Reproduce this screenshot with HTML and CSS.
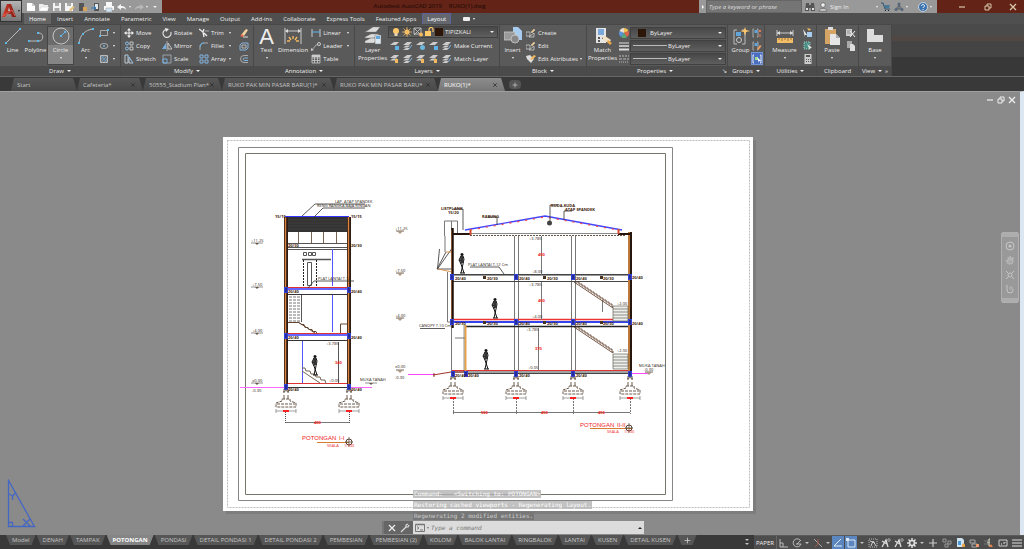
FILE: index.html
```html
<!DOCTYPE html>
<html lang="en">
<head>
<meta charset="utf-8">
<title>Autodesk AutoCAD 2019 RUKO(1).dwg</title>
<link rel="stylesheet" href="styles.css">
</head>
<body>
<svg class="defs" aria-hidden="true">
<defs>
<linearGradient id="red-a" x1="0" y1="0" x2="1" y2="0"><stop offset="0" stop-color="#d8402c"/><stop offset="1" stop-color="#7c1712"/></linearGradient>
<symbol id="new" viewBox="0 0 10 10"><path d="M1 1h5l3 3v5H1z" fill="#fff"/><path d="M6 1v3h3" fill="#ccc"/></symbol>
<symbol id="open" viewBox="0 0 10 10"><path d="M0 2h4l1 1h4v6H0z" fill="#eee"/><path d="M2 5h8L8 9H0z" fill="#fff" stroke="#bbb" stroke-width=".4"/></symbol>
<symbol id="save" viewBox="0 0 10 10"><path d="M1 1h8v8H1z" fill="#f4f4f4"/><path d="M3 1h4v3H3zM2.500 6h5v3h-5z" fill="#aaa"/></symbol>
<symbol id="saveas" viewBox="0 0 10 10"><path d="M0 1h8v8H0z" fill="#f4f4f4"/><path d="M2 1h4v3H2z" fill="#aaa"/><path d="M4 8l4-4 1.500 1.500-4 4z" fill="#e8c078"/></symbol>
<symbol id="webopen" viewBox="0 0 10 10"><path d="M1 1h5v8H1z" fill="#555"/><path d="M5 5h4v4H5z" fill="#d9a45a"/></symbol>
<symbol id="websave" viewBox="0 0 10 10"><path d="M3 1h5v8H3z" fill="#555"/><path d="M4 2h3v5H4z" fill="#dfe8ee"/><path d="M0 6h5M3 4l2 2-2 2" stroke="#357cc0" fill="none"/></symbol>
<symbol id="print" viewBox="0 0 10 10"><path d="M2 0h6v4H2zM0 4h10v4H0z" fill="#f8f8f8"/><path d="M2 6h6v4H2z" fill="#cfe0ee" stroke="#888" stroke-width=".4"/></symbol>
<symbol id="undo" viewBox="0 0 10 10"><path d="M0 5l4-3v2c3 0 5 1 5 4-1-2-3-2-5-2v2z" fill="#f4f4f4"/></symbol>
<symbol id="redo" viewBox="0 0 10 10"><path d="M10 5L6 2v2C3 4 1 5 1 8c1-2 3-2 5-2v2z" fill="#b8b8b8"/></symbol>
<symbol id="line" viewBox="0 0 18 18"><path d="M2 16L16 2" stroke="#bbb"/><path d="M1 15h2v2H1zM15 1h2v2h-2z" fill="#62b5e8"/></symbol>
<symbol id="pline" viewBox="0 0 18 18"><path d="M2 14h10c5 0 5-8 0-8" stroke="#bbb" fill="none"/><path d="M1 13h2v2H1zM10 13h2v2h-2zM10 5h2v2h-2z" fill="#62b5e8"/></symbol>
<symbol id="circle" viewBox="0 0 18 18"><circle cx="9" cy="9" r="8" fill="none" stroke="#c4c4c4"/><path d="M9 9l4-4" stroke="#62b5e8"/><path d="M8 8h2v2H8zM12 4h2v2h-2z" fill="#62b5e8"/></symbol>
<symbol id="arc" viewBox="0 0 18 18"><path d="M2 16C3 8 8 3 16 2" fill="none" stroke="#bbb"/><path d="M1 15h2v2H1zM5 6h2v2H5zM15 1h2v2h-2z" fill="#62b5e8"/></symbol>
<symbol id="rect" viewBox="0 0 10 10"><path d="M1.500 2.500h7v5h-7z" fill="none" stroke="#aaa"/><path d="M0 7h2v2H0zM8 1h2v2H8z" fill="#62b5e8"/></symbol>
<symbol id="ellipse" viewBox="0 0 10 10"><ellipse cx="5" cy="5" rx="4" ry="2.500" fill="none" stroke="#aaa"/><circle cx="5" cy="5" r="1" fill="#62b5e8"/></symbol>
<symbol id="hatch" viewBox="0 0 10 10"><path d="M1.500 1.500h7v7h-7z" fill="#777" stroke="#bbb"/><path d="M2 8l6-6M2 5l3-3M5 8l3-3M2 2l6 6" stroke="#62a5d8" stroke-width=".7"/></symbol>
<symbol id="move" viewBox="0 0 10 10"><path d="M5 0l2 2.500H3zM5 10l2-2.500H3zM0 5l2.500-2v4zM10 5L7.500 3v4z" fill="#eee"/><path d="M5 1v8M1 5h8" stroke="#eee"/></symbol>
<symbol id="copy" viewBox="0 0 10 10"><circle cx="3" cy="2.500" r="1.500" fill="none" stroke="#8ac0e8"/><circle cx="3" cy="7.500" r="1.500" fill="none" stroke="#8ac0e8"/><path d="M6 1h3v3H6zM6 6h3v3H6z" fill="none" stroke="#ddd" stroke-width=".8"/></symbol>
<symbol id="stretch" viewBox="0 0 10 10"><path d="M1 1h3v8H1zM5 3l4 6H5z" fill="none" stroke="#c8d4de" stroke-width=".9"/><path d="M3 1l6 8" stroke="#62a5d8" stroke-width=".7"/></symbol>
<symbol id="rotate" viewBox="0 0 10 10"><path d="M4 1.500A4 4 0 1 0 8.800 4" fill="none" stroke="#ddd" stroke-width="1.200"/><path d="M3 0l4 1-3 3z" fill="#eee"/></symbol>
<symbol id="mirror" viewBox="0 0 10 10"><path d="M4 2v6H0z" fill="#77afe0"/><path d="M6 2v6h4z" fill="none" stroke="#ddd" stroke-width=".8"/><path d="M5 0v10" stroke="#ddd" stroke-width=".6"/></symbol>
<symbol id="scale" viewBox="0 0 10 10"><path d="M1 1h8v8H1z" fill="none" stroke="#a8b4be" stroke-width=".8"/><path d="M1 5h4v4H1z" fill="none" stroke="#77afe0"/></symbol>
<symbol id="trim" viewBox="0 0 10 10"><path d="M0 1l4 3 1-3M4 4l1 5M5 5l3 3" stroke="#eee" stroke-width="1.300" fill="none"/><path d="M6 3h4" stroke="#aaa"/></symbol>
<symbol id="fillet" viewBox="0 0 10 10"><path d="M1 9V6c0-3 2-4 4-4h4" fill="none" stroke="#aaa"/><path d="M1 6c0-3 2-4 4-4" fill="none" stroke="#62b5e8"/></symbol>
<symbol id="array" viewBox="0 0 10 10"><path d="M1 1h3v3H1zM6 1h3v3H6zM1 6h3v3H1zM6 6h3v3H6z" fill="none" stroke="#84b4e0"/></symbol>
<symbol id="erase" viewBox="0 0 10 10"><path d="M2 7l5-6 2 1-4 6z" fill="#f3d3a2"/><path d="M1 8l2-2 2 2-1 1z" fill="#e46a50"/><path d="M4 9h5" stroke="#ddd"/></symbol>
<symbol id="explode" viewBox="0 0 10 10"><path d="M1 4l2-2h6v5L7 9H1z" fill="none" stroke="#84b4e0"/><path d="M3 4h4v3H3z" fill="none" stroke="#ccc" stroke-width=".8"/></symbol>
<symbol id="offset" viewBox="0 0 10 10"><path d="M9 1.500H5a3.500 3.500 0 0 0 0 7h4" fill="none" stroke="#aaa"/><path d="M9 4H5.500a1.200 1.200 0 0 0 0 2.500H9" fill="none" stroke="#84b4e0"/></symbol>
<symbol id="dim" viewBox="0 0 18 18"><path d="M1 1v16M17 1v16M2 4h14" stroke="#ccc" fill="none"/><path d="M1 4l3-2v4zM17 4l-3-2v4z" fill="#ddd"/><path d="M9 9v3M5 10l2 3M13 10l-2 3M3 14h3M12 14h3" stroke="#f3b95f" stroke-width="1.400"/></symbol>
<symbol id="linear" viewBox="0 0 10 10"><path d="M1 1v8M9 1v8" stroke="#ccc"/><path d="M1 4h8" stroke="#62b5e8"/></symbol>
<symbol id="leader" viewBox="0 0 10 10"><path d="M1 9l4-5h2" fill="none" stroke="#aaa"/><circle cx="8" cy="3" r="1.500" fill="none" stroke="#ccc"/><path d="M0 7l3 2-3 1z" fill="#ccc"/></symbol>
<symbol id="table" viewBox="0 0 10 10"><path d="M1 1h8v8H1zM1 4h8M1 6.500h8M3.500 2v7M6.500 2v7" fill="none" stroke="#ccc" stroke-width=".8"/><path d="M1 1h8v2H1z" fill="#ccc"/></symbol>
<symbol id="layers" viewBox="0 0 18 18"><path d="M1 14l6-3h8l-5 5H1zM1 10l6-3h8l-5 4H1zM3 4l6-4h7l-4 5H1z" fill="#dcdcdc" stroke="#777" stroke-width=".4"/><path d="M11 8h6v9h-6z" fill="#dde8f0" stroke="#777" stroke-width=".5"/><path d="M12 9h4v3h-4z" fill="#62a5d8"/></symbol>
<symbol id="bulb" viewBox="0 0 10 10"><circle cx="5" cy="4" r="3" fill="#ffc868"/><path d="M3.500 6h3v3h-3z" fill="#e8d5b0"/></symbol>
<symbol id="sun" viewBox="0 0 10 10"><circle cx="5" cy="5" r="2.500" fill="#ffc868"/><path d="M5 0v10M0 5h10M1.500 1.500l7 7M8.500 1.500l-7 7" stroke="#f3b95f" stroke-width=".8"/></symbol>
<symbol id="vpf" viewBox="0 0 10 10"><path d="M1 1h7v6H1zM1 1l7 7M8 1L1 8" fill="none" stroke="#bbb"/><circle cx="8" cy="7.500" r="2" fill="#f3b95f"/></symbol>
<symbol id="lock" viewBox="0 0 10 10"><path d="M1 4h6v5H1z" fill="#ffc868"/><path d="M5 4V2.500a1.500 1.500 0 0 1 4 0V5" fill="none" stroke="#ffc868" stroke-width="1.200"/></symbol>
<symbol id="ly-b" viewBox="0 0 10 10"><path d="M0 4l4-3h5L6 4z" fill="#ccc"/><path d="M5 5h4v4H5z" fill="#5db2e6"/></symbol>
<symbol id="ly-c" viewBox="0 0 10 10"><path d="M0 4l4-3h5L6 4z" fill="#ccc"/><circle cx="6.500" cy="6.500" r="2.500" fill="#6bb7dc"/></symbol>
<symbol id="ly-s" viewBox="0 0 10 10"><path d="M0 4l4-3h5L6 4zM0 6.500l3-2h4l-2 2zM0 9l3-2h4L5 9z" fill="#ccc"/><path d="M6 8l3-4" stroke="#84b4e0"/></symbol>
<symbol id="ly-o" viewBox="0 0 10 10"><path d="M0 4l4-3h5L6 4zM0 6.500l3-2h4l-2 2z" fill="#ccc"/><path d="M5 5h3v4H5z" fill="#f3b95f"/></symbol>
<symbol id="insert" viewBox="0 0 18 18"><path d="M9 0h5l4 4v9H9z" fill="#a8ccf0"/><path d="M0 5h11v8H0z" fill="#9a9a9a" stroke="#ccc" stroke-width=".8"/><circle cx="11" cy="12" r="4" fill="#888" stroke="#ccc" stroke-width=".8"/></symbol>
<symbol id="create" viewBox="0 0 10 10"><path d="M0 4h4v4H0zM3 9h5V5z" fill="none" stroke="#ccc" stroke-width=".8"/><path d="M5 4l3-3 1 1-3 3z" fill="#ffc868" stroke="#ccc" stroke-width=".5"/></symbol>
<symbol id="attr" viewBox="0 0 10 10"><path d="M0 2l4-1 4 4-3 4-4-4z" fill="#ddd"/><path d="M4 5l4-4 2 1-4 4z" fill="#f3b95f"/></symbol>
<symbol id="match" viewBox="0 0 18 18"><path d="M2 1h10v15H2z" fill="#e4e4e4"/><path d="M4 2h6v6H4z" fill="#79a9da"/><path d="M4 10h2v2H4zM8 10h2v2H8zM4 13h2v2H4z" fill="#555"/><path d="M8 10l3-1 6 4-2 3-5-2z" fill="#f0e2c4"/><path d="M14 13l4 3-2 2-3-3z" fill="#e8a54a"/></symbol>
<symbol id="wheel" viewBox="0 0 10 10"><path d="M5 5V0a5 5 0 0 1 4.500 3z" fill="#f0c050"/><path d="M5 5l4.500-2A5 5 0 0 1 8 9z" fill="#dd6548"/><path d="M5 5l3 4a5 5 0 0 1-6 0z" fill="#5aa878"/><path d="M5 5L2 9a5 5 0 0 1-1.500-6z" fill="#5794da"/><path d="M5 5L.5 3A5 5 0 0 1 5 0z" fill="#e9dcd0"/></symbol>
<symbol id="lw" viewBox="0 0 10 10"><path d="M0 2h10" stroke="#ddd"/><path d="M0 5h10" stroke="#ddd" stroke-width="1.500"/><path d="M0 8.500h10" stroke="#ddd" stroke-width="2"/></symbol>
<symbol id="lt" viewBox="0 0 10 10"><path d="M0 2h10" stroke="#bbb" stroke-dasharray="2 1"/><path d="M0 5h10" stroke="#bbb" stroke-dasharray="3 1"/><path d="M0 8h10" stroke="#bbb" stroke-dasharray="1 1"/></symbol>
<symbol id="group" viewBox="0 0 18 18"><path d="M5 3H2v14h3M10 3h3v14h-3" fill="none" stroke="#bbb"/><circle cx="7" cy="13" r="2.500" fill="none" stroke="#ccc"/><path d="M4 5h5v4H4z" fill="#62a5d8"/><path d="M13 0l1 3 4 1-4 1-1 4-1-4-4-1 4-1z" fill="#ffc868"/></symbol>
<symbol id="gsm" viewBox="0 0 10 10"><path d="M2 1H1v8h1M5 1h1v8H5" fill="none" stroke="#aaa"/><path d="M2.500 2h3v3h-3z" fill="#62a5d8"/><path d="M7 2l2 2M9 2L7 4M8 6v3" stroke="#e47850"/></symbol>
<symbol id="gedit" viewBox="0 0 10 10"><path d="M2 1H1v8h1M5 1h1v8H5" fill="none" stroke="#aaa"/><path d="M2.500 2h3v3h-3z" fill="#62a5d8"/><path d="M5 8l3-4 1.500 1-3 4z" fill="#f0a060"/></symbol>
<symbol id="gsel" viewBox="0 0 10 10"><path d="M2 1H1v8h1M8 1h1v8H8" fill="none" stroke="#eee"/><path d="M3 3h3v3H3z" fill="#9ed88d"/><path d="M5 3l4 4H7v2z" fill="#fff"/></symbol>
<symbol id="measure" viewBox="0 0 18 18"><path d="M1 3v6M17 3v6M1 6h16" stroke="#ccc"/><path d="M1 6l3-2v4zM17 6l-3-2v4z" fill="#ddd"/><path d="M1 11h16v5H1z" fill="#f3bd68"/><path d="M3 11v2M6 11v3M9 11v2M12 11v3M15 11v2" stroke="#7a5b2a" stroke-width=".7"/></symbol>
<symbol id="qsel" viewBox="0 0 10 10"><path d="M0 1l4 6H2v2z" fill="#eee"/><path d="M4 4h5v5H4z" fill="#a8ccf0"/><path d="M4 0l2 3 2-2z" fill="#f3b95f"/></symbol>
<symbol id="sela" viewBox="0 0 10 10"><path d="M1 1h6v7H1z" fill="#4c8e86" stroke="#a0d0c0" stroke-dasharray="1 1"/><path d="M4 3l5 4H7v2z" fill="#eee"/></symbol>
<symbol id="calc" viewBox="0 0 10 10"><path d="M1.500 0h7v10h-7z" fill="#ccc"/><path d="M3 1h4v2H3zM3 5h1v1H3zM5 5h1v1H5zM7 5h1v1H7zM3 7h1v1H3zM5 7h1v1H5zM7 7h1v1H7z" fill="#555"/></symbol>
<symbol id="paste" viewBox="0 0 18 18"><path d="M2 2h11v15H2z" fill="#d6a565"/><path d="M5 0h5v3H5z" fill="#ddd"/><path d="M7 7h6l4 4v7H7z" fill="#e6e6e6"/><path d="M13 7v4h4" fill="#aaa"/></symbol>
<symbol id="cut" viewBox="0 0 10 10"><path d="M0 1h6v7H0z" fill="#ccc"/><path d="M1 3h4M1 5h4" stroke="#777" stroke-width=".7"/><path d="M4 3l5 6M9 3L4 9" stroke="#eee"/></symbol>
<symbol id="copyc" viewBox="0 0 10 10"><path d="M1 0h5v7H1z" fill="#aaa"/><path d="M4 3h3l2 2v5H4z" fill="#ddd"/></symbol>
<symbol id="base" viewBox="0 0 18 18"><path d="M1 2h7v6h9v7H1z" fill="#dcdcdc"/></symbol>
<symbol id="binoc" viewBox="0 0 10 10"><path d="M1 1h3v2h2V1h3l1 8H6V6H4v3H0z" fill="#555"/><path d="M1 6h2v2H1zM7 6h2v2H7z" fill="#ddd"/></symbol>
<symbol id="user" viewBox="0 0 10 10"><circle cx="5" cy="3" r="2.300" fill="#eee" stroke="#555" stroke-width=".7"/><path d="M1 9c0-3 8-3 8 0z" fill="#eee" stroke="#555" stroke-width=".7"/></symbol>
<symbol id="cart" viewBox="0 0 10 10"><path d="M0 1h2l2 6h5" fill="none" stroke="#2e5270"/><path d="M3 3h6L8 6H4z" fill="#4c7898"/><path d="M4 8h1v1H4zM7 8h1v1H7z" fill="#222"/></symbol>
<symbol id="share" viewBox="0 0 10 10"><path d="M5 3L2 7h6zM5 3v4" fill="none" stroke="#44525e" stroke-width=".8"/><circle cx="5" cy="2" r="1.500" fill="#55677a"/><circle cx="2" cy="7.500" r="1.500" fill="#55677a"/><circle cx="8" cy="7.500" r="1.500" fill="#55677a"/></symbol>
<symbol id="help" viewBox="0 0 10 10"><circle cx="5" cy="5" r="4.500" fill="#3d73b0" stroke="#eee" stroke-width=".7"/><path d="M3.500 4c0-2 3-2 3 0 0 1-1.500 1-1.500 2M5 7v1" fill="none" stroke="#fff"/></symbol>
<symbol id="min" viewBox="0 0 10 10"><path d="M2 5h6" stroke="currentColor" stroke-width="1.200"/></symbol>
<symbol id="restore" viewBox="0 0 10 10"><path d="M2 4h4v4H2zM4 4V2h4v4H6" fill="none" stroke="currentColor"/></symbol>
<symbol id="x" viewBox="0 0 10 10"><path d="M2 2l6 6M8 2L2 8" stroke="currentColor" stroke-width="1.300"/></symbol>
<symbol id="ortho" viewBox="0 0 10 10"><path d="M1 1v8h8M1 5h3v4" fill="none" stroke="#bbb"/></symbol>
<symbol id="polar" viewBox="0 0 10 10"><path d="M8 2A4 4 0 1 0 9 6H4M5 6l4-4" fill="none" stroke="#bbb"/></symbol>
<symbol id="iso" viewBox="0 0 10 10"><path d="M1 1l8 8" stroke="#aaa"/><path d="M5 1v5L2 9" stroke="#a85a48" fill="none"/></symbol>
<symbol id="otrack" viewBox="0 0 10 10"><path d="M1 8h8M1 8l7-7" stroke="#e4eef8"/></symbol>
<symbol id="osnap" viewBox="0 0 10 10"><path d="M2 2h7v7H2z" fill="none" stroke="#dce8f4"/><path d="M0 0h3v3H0z" fill="#dce8f4"/></symbol>
<symbol id="annv" viewBox="0 0 10 10"><path d="M1 1h8v8H1z" fill="none" stroke="#bbb" stroke-dasharray="1 1"/><path d="M3 8l2-5 3 5M2 3l5 2" stroke="#ccc" fill="none"/></symbol>
<symbol id="anns" viewBox="0 0 10 10"><path d="M1 9l4-7 2 7M1 3l5 3" stroke="#ddd" stroke-width="1.300" fill="none"/><circle cx="8" cy="2" r="1.300" fill="none" stroke="#ccc" stroke-width=".7"/></symbol>
<symbol id="gear" viewBox="0 0 10 10"><path d="M5 0v10M0 5h10M1.500 1.500l7 7M8.500 1.500l-7 7" stroke="#ddd" stroke-width="1.500"/><circle cx="5" cy="5" r="2.500" fill="#555" stroke="#ddd" stroke-width="1.700"/></symbol>
<symbol id="plus" viewBox="0 0 10 10"><path d="M5 1v8M1 5h8" stroke="#ccc" stroke-width="1.200"/></symbol>
<symbol id="shapes" viewBox="0 0 10 10"><path d="M1 1h3v3H1zM6 3h3v3H6zM3 6h3v3H3z" fill="none" stroke="#999"/></symbol>
<symbol id="page" viewBox="0 0 10 10"><path d="M1 0h5l2 2v7H1z" fill="#cfe2f0"/><path d="M2 3h3v4H2z" fill="#4c9ad8"/><path d="M6 9V7a1.500 1.500 0 0 1 3 0v2z" fill="#e8a54a"/></symbol>
<symbol id="lockui" viewBox="0 0 10 10"><path d="M1 2h5v3H1zM3 6h5v3H3z" fill="none" stroke="#aaa"/><path d="M7 9V6h3v3z" fill="#e89a6a"/></symbol>
<symbol id="iso2" viewBox="0 0 10 10"><path d="M7 0v9a5 5 0 0 1 0-9" fill="#bba"/><path d="M1 3h6M1 6h6" stroke="#777"/><path d="M6 9l2-3 2 3z" fill="#e8824a"/></symbol>
<symbol id="full" viewBox="0 0 10 10"><path d="M1 2h8v6H1z" fill="none" stroke="#ccc"/><path d="M5 5h2V4M4 6H3" stroke="#ddd"/></symbol>
<symbol id="menu" viewBox="0 0 10 10"><path d="M0 2h10M0 5h10M0 8h10" stroke="#ddd" stroke-width="1.200"/></symbol>
<symbol id="wrench" viewBox="0 0 10 10"><path d="M1 9l5-5M6 4l0-2 2-1M6 4h2l1-2" stroke="#ddd" stroke-width="1.200" fill="none"/></symbol>
<symbol id="prompt" viewBox="0 0 10 10"><path d="M.5 1.500h9v7h-9z" fill="#ddd" stroke="#777"/><path d="M.5 1.500h9" stroke="#777" stroke-width="1.500"/><path d="M2 3.500l2 1.500-2 1.500M5 7h3" fill="none" stroke="#666" stroke-width=".8"/></symbol>
</defs>
</svg>

<header class="top">
  <button class="app-menu" aria-label="Application menu"><svg viewBox="0 0 16 16"><path d="M1 14L6 1h4l5 13h-4l-1-3H6l-2 3z" fill="url(#red-a)"/><path d="M7 8l1-4 1 4z" fill="#c9c9c9"/><path d="M2 13l9-6 3 6" fill="none" stroke="#e8806c" stroke-width=".7"/></svg><i class="down"></i></button>
  <div class="top-rows">
    <div class="titlebar">
      <div class="quick">
        <button aria-label="New"><svg><use href="#new"/></svg></button>
        <button aria-label="Open"><svg><use href="#open"/></svg></button>
        <button aria-label="Save"><svg><use href="#save"/></svg></button>
        <button aria-label="Save as"><svg><use href="#saveas"/></svg></button>
        <button aria-label="Open from web"><svg><use href="#webopen"/></svg></button>
        <button aria-label="Save to web"><svg><use href="#websave"/></svg></button>
        <button aria-label="Plot"><svg><use href="#print"/></svg></button>
        <button aria-label="Undo"><svg><use href="#undo"/></svg></button><i class="down"></i>
        <button aria-label="Redo"><svg><use href="#redo"/></svg></button><i class="down"></i>
        <i class="down big"></i>
      </div>
      <h1 class="app-title"><span>Autodesk AutoCAD 2019</span><span>RUKO(1).dwg</span></h1>
      <div class="info">
        <button class="expand" aria-label="Collapse search"><i class="right"></i></button>
        <input class="search" type="text" aria-label="Search" placeholder="Type a keyword or phrase">
        <button aria-label="Find"><svg><use href="#binoc"/></svg></button>
        <button class="sign"><svg><use href="#user"/></svg>Sign In<i class="down"></i></button>
        <button aria-label="App store"><svg><use href="#cart"/></svg></button>
        <button aria-label="Connect"><svg><use href="#share"/></svg><i class="down"></i></button>
        <button class="help" aria-label="Help"><svg><use href="#help"/></svg><i class="down"></i></button>
      </div>
      <div class="window-buttons">
        <button aria-label="Minimize"><svg><use href="#min"/></svg></button>
        <button aria-label="Restore"><svg><use href="#restore"/></svg></button>
        <button aria-label="Close"><svg><use href="#x"/></svg></button>
      </div>
    </div>
    <nav class="ribbon-tabs">
      <button class="current">Home</button><button>Insert</button><button>Annotate</button><button>Parametric</button><button>View</button><button>Manage</button><button>Output</button><button>Add-ins</button><button>Collaborate</button><button>Express Tools</button><button>Featured Apps</button><button class="context">Layout</button>
      <button class="toggle" aria-label="Minimize ribbon"><i class="pill"></i><i class="down"></i></button>
    </nav>
  </div>
</header>

<section class="ribbon">
  <div class="panel draw">
    <div class="tools">
      <button class="large"><svg><use href="#line"/></svg>Line</button>
      <button class="large"><svg><use href="#pline"/></svg>Polyline</button>
      <button class="large hot"><svg><use href="#circle"/></svg>Circle<i class="down"></i></button>
      <button class="large"><svg><use href="#arc"/></svg>Arc<i class="down"></i></button>
      <div class="stack">
        <button aria-label="Rectangle"><svg><use href="#rect"/></svg><i class="down"></i></button>
        <button aria-label="Ellipse"><svg><use href="#ellipse"/></svg><i class="down"></i></button>
        <button aria-label="Hatch"><svg><use href="#hatch"/></svg><i class="down"></i></button>
      </div>
    </div>
    <h2>Draw<i class="down big"></i></h2>
  </div>
  <div class="panel modify">
    <div class="tools grid">
      <button><svg><use href="#move"/></svg>Move</button><button><svg><use href="#rotate"/></svg>Rotate</button><button class="split"><svg><use href="#trim"/></svg>Trim<i class="down"></i></button><button aria-label="Erase"><svg><use href="#erase"/></svg></button>
      <button><svg><use href="#copy"/></svg>Copy</button><button><svg><use href="#mirror"/></svg>Mirror</button><button class="split"><svg><use href="#fillet"/></svg>Fillet<i class="down"></i></button><button aria-label="Explode"><svg><use href="#explode"/></svg></button>
      <button><svg><use href="#stretch"/></svg>Stretch</button><button><svg><use href="#scale"/></svg>Scale</button><button class="split"><svg><use href="#array"/></svg>Array<i class="down"></i></button><button aria-label="Offset"><svg><use href="#offset"/></svg></button>
    </div>
    <h2>Modify<i class="down big"></i></h2>
  </div>
  <div class="panel annotation">
    <div class="tools">
      <button class="large"><span class="letter" aria-hidden="true">A</span>Text<i class="down"></i></button>
      <button class="large"><svg><use href="#dim"/></svg>Dimension</button>
      <div class="stack">
        <button class="split"><svg><use href="#linear"/></svg>Linear<i class="down"></i></button>
        <button class="split"><svg><use href="#leader"/></svg>Leader<i class="down"></i></button>
        <button><svg><use href="#table"/></svg>Table</button>
      </div>
    </div>
    <h2>Annotation<i class="down big"></i></h2>
  </div>
  <div class="panel layer">
    <div class="tools">
      <button class="large"><svg><use href="#layers"/></svg>Layer<br>Properties</button>
      <div class="stack fill">
        <div class="combo"><svg><use href="#bulb"/></svg><svg><use href="#sun"/></svg><svg><use href="#vpf"/></svg><svg><use href="#lock"/></svg><i class="swatch"></i><select aria-label="Layer"><option>TIPIZKALI</option></select><i class="down big"></i></div>
        <div class="icon-row"><button aria-label="Layer off"><svg><use href="#ly-b"/></svg></button><button aria-label="Isolate"><svg><use href="#ly-s"/></svg></button><button aria-label="Freeze"><svg><use href="#ly-c"/></svg></button><button aria-label="Lock layer"><svg><use href="#ly-b"/></svg></button><button><svg><use href="#ly-s"/></svg>Make Current</button></div>
        <div class="icon-row"><button aria-label="Layers on"><svg><use href="#ly-o"/></svg></button><button aria-label="Unisolate"><svg><use href="#ly-s"/></svg></button><button aria-label="Thaw"><svg><use href="#ly-o"/></svg></button><button aria-label="Unlock layer"><svg><use href="#ly-o"/></svg></button><button><svg><use href="#ly-s"/></svg>Match Layer</button></div>
      </div>
    </div>
    <h2>Layers<i class="down big"></i></h2>
  </div>
  <div class="panel block">
    <div class="tools">
      <button class="large"><svg><use href="#insert"/></svg>Insert<i class="down"></i></button>
      <div class="stack fill">
        <button><svg><use href="#create"/></svg>Create</button>
        <button><svg><use href="#create"/></svg>Edit</button>
        <button class="split"><svg><use href="#attr"/></svg>Edit Attributes<i class="down"></i></button>
      </div>
    </div>
    <h2>Block<i class="down big"></i></h2>
  </div>
  <div class="panel props">
    <div class="tools">
      <button class="large"><svg><use href="#match"/></svg>Match<br>Properties</button>
      <div class="stack fill">
        <div class="prop"><svg><use href="#wheel"/></svg><div class="combo"><i class="swatch"></i><select aria-label="Object color"><option>ByLayer</option></select><i class="down big"></i></div></div>
        <div class="prop"><svg><use href="#lw"/></svg><div class="combo"><i class="rule"></i><select aria-label="Lineweight"><option>ByLayer</option></select><i class="down big"></i></div></div>
        <div class="prop"><svg><use href="#lt"/></svg><div class="combo"><i class="rule"></i><select aria-label="Linetype"><option>ByLayer</option></select><i class="down big"></i></div></div>
      </div>
    </div>
    <h2>Properties<i class="down big"></i><span class="launch">↘</span></h2>
  </div>
  <div class="panel groups">
    <div class="tools">
      <button class="large"><svg><use href="#group"/></svg>Group</button>
      <div class="stack">
        <button aria-label="Ungroup"><svg><use href="#gsm"/></svg></button>
        <button aria-label="Group edit"><svg><use href="#gedit"/></svg></button>
        <button class="on" aria-label="Group selection"><svg><use href="#gsel"/></svg></button>
      </div>
    </div>
    <h2>Groups<i class="down big"></i></h2>
  </div>
  <div class="panel utils">
    <div class="tools">
      <button class="large"><svg><use href="#measure"/></svg>Measure<i class="down"></i></button>
      <div class="stack">
        <button aria-label="Quick select"><svg><use href="#qsel"/></svg></button>
        <button aria-label="Select all"><svg><use href="#sela"/></svg></button>
        <button aria-label="Calculator"><svg><use href="#calc"/></svg></button>
      </div>
    </div>
    <h2>Utilities<i class="down big"></i></h2>
  </div>
  <div class="panel clip">
    <div class="tools">
      <button class="large"><svg><use href="#paste"/></svg>Paste<i class="down"></i></button>
      <div class="stack">
        <button aria-label="Cut"><svg><use href="#cut"/></svg></button>
        <button aria-label="Copy clip"><svg><use href="#copyc"/></svg></button>
      </div>
    </div>
    <h2>Clipboard</h2>
  </div>
  <div class="panel view">
    <div class="tools"><button class="large"><svg><use href="#base"/></svg>Base<i class="down"></i></button></div>
    <h2>View<i class="down big"></i><span>»</span></h2>
  </div>
</section>

<nav class="doc-tabs">
  <div class="doc start"><button>Start</button></div>
  <div class="doc cafe"><button>Cafeteria*</button><button class="close" aria-label="Close Cafeteria"><svg><use href="#x"/></svg></button></div>
  <div class="doc stadium"><button>50555_Stadium Plan*</button><button class="close" aria-label="Close Stadium Plan"><svg><use href="#x"/></svg></button></div>
  <div class="doc pasar1"><button>RUKO PAK MIN PASAR BARU(1)*</button><button class="close" aria-label="Close Pasar Baru 1"><svg><use href="#x"/></svg></button></div>
  <div class="doc pasar"><button>RUKO PAK MIN PASAR BARU*</button><button class="close" aria-label="Close Pasar Baru"><svg><use href="#x"/></svg></button></div>
  <div class="doc active"><button>RUKO(1)*</button><button class="close" aria-label="Close RUKO"><svg><use href="#x"/></svg></button></div>
  <button class="add" aria-label="New drawing"><svg><use href="#plus"/></svg></button>
</nav>

<main class="canvas">
  <div class="mdi"><button aria-label="Minimize drawing"><svg><use href="#min"/></svg></button><button aria-label="Restore drawing"><svg><use href="#restore"/></svg></button><button aria-label="Close drawing"><svg><use href="#x"/></svg></button></div>
  <svg class="paper" viewBox="223 137 530 374" role="img" aria-label="Potongan drawing sheet">
    <defs>
      <g id="man"><circle cx="0" cy="1.500" r="1.500" fill="#111"/><path d="M-1 3L-3 7l2 4M1 3l1 3-1 5-2 9M-1 3l0 8 3 9M-3 7l4 1" fill="none" stroke="#111" stroke-width="1"/><path d="M-2 3h3l1 7h-3z" fill="#333"/><path d="M-2 20h5" stroke="#111"/></g>
      <g id="foot" fill="none" stroke="#6b5a4c"><path d="M-2 2v10M2 2v10" stroke-dasharray="4 2"/><path d="M-3 5q3-3 6 0"/><path d="M-4 12h8v2l6 2v4h-20v-4l6-2zM-9 17H9" stroke-dasharray="3 1"/><path d="M-10 24h20M-10 22v4M10 22v4" stroke="#777" stroke-width=".7"/><path d="M-3 24h6" stroke="#f22" stroke-width="2"/></g>
      <g id="beam"><path d="M-2-3h4v6h-4z" fill="#3340d8"/><path d="M0-2v4" stroke="#111" stroke-width=".7"/></g>
      <g id="lvl"><path d="M-6 0H6" stroke="#777" stroke-width=".8"/><path d="M-2 0h4L0 2z" fill="#654"/></g>
      <g id="mark"><path d="M-4 0H4" stroke="#543" stroke-width=".8"/><path d="M-3 0h6L0 3z" fill="#a98"/></g>
      <g id="flight" fill="none" stroke="#654430" stroke-width=".9"><path d="M0 0h3v2h3v2h3v2h3v2h3v2h3v2h3v2h3v2h3v2h3v2h3v2h3v3h2"/><path d="M-2 0L37 26"/></g>
      <g id="landing" stroke="#665" stroke-width=".7"><path d="M0 0h15v15H0z" fill="#eee"/><path d="M0 3h15M0 6h15M0 9h15M0 12h15"/></g>
    </defs>
    <path d="M223 137h530v374H223z" fill="#fff"/>
    <path d="M227.500 140.500h522v367h-522z" fill="none" stroke="#bbb" stroke-dasharray="2 1"/>
    <path d="M238.500 147.500h434v353h-434z" fill="none" stroke="#858585"/>
    <path d="M245.500 153.500h420v341h-420z" fill="none" stroke="#777468"/>

    <g fill="none" stroke="#555" stroke-width="1">
      <path d="M298.500 217v26M311.500 217v26M323.500 217v26M336.500 217v26" stroke="#765"/>
      <path d="M285 217h64v15h-64z" fill="#333" stroke="none"/>
      <path d="M287 220h61M287 223h61M287 226h61M287 229h61" stroke="#484848" stroke-width=".5"/>
      <path d="M285 216.500h64" stroke="#33f"/>
      <path d="M285 243.500h64M285 247.500h64M287 249.500h61"/>
      <path d="M303.500 252.500h3v3h-3zM308.500 252.500h3v3h-3zM312.500 252.500h3v3h-3z"/>
      <path d="M302 259.500h29" stroke-width="1.500"/><path d="M303.500 260v27M316.500 260v27" stroke="#222" stroke-dasharray="2 1"/><path d="M307.500 262.500h4v23h-4z"/>
      <path d="M332.500 249v37M332.500 295v37M302.500 341v42" stroke="#55f"/>
      <path d="M286 287.500h62M286 333.500h62M286 383.500h62" stroke="#d33"/>
      <path d="M286 289h62M286 335h62" stroke="#33f" stroke-width="1.500"/>
      <path d="M286 294.500h62M286 340.500h62M286 387.500h62" stroke="#333"/>
      <path d="M289 297h13M289 300h13M289 303h13M289 306h13M289 309h13M289 312h13M289 315h13M289 318h13M289 321h13" stroke="#777" stroke-dasharray="3 1"/><path d="M301.500 295v27"/>
      <path d="M287 322.500h12l2 2h3l1 3h3l1 2h3l1 2h3l1 2M298 322l17 11M340.500 333v-9h7" stroke="#654430"/>
      <path d="M302 368h3l1 3h4l1 3h4l1 3h4l1 3h4l1 4M302 371l18 12" stroke="#765"/>
      <path d="M338.500 342v41"/>
      <path d="M284 217h4v170h-4zM347 217h4v170h-4z" fill="#2b1c14" stroke="none"/>
      <path d="M285.500 217v170M348.500 217v170" stroke="#dc8440" stroke-width="1.400"/>
      <path d="M240 387.500h45M350 387.500h22" stroke="#f6f"/>
      <path d="M285.500 412v12M349.500 412v12" stroke-dasharray="1 1"/><path d="M285 422.500h64" stroke-width=".8"/>
      <path d="M302 216l13-12h50M312 219l11-11h42M308 288l6-7h40" stroke="#333" stroke-width=".8"/>
    </g>
    <use href="#beam" x="286" y="290"/><use href="#beam" x="349" y="290"/><use href="#beam" x="286" y="336"/><use href="#beam" x="349" y="336"/><use href="#beam" x="286" y="387"/><use href="#beam" x="349" y="387"/>
    <use href="#man" x="315" y="355"/>
    <use href="#foot" x="286" y="387"/><use href="#foot" x="349" y="387"/>
    <use href="#lvl" x="257" y="243"/><use href="#lvl" x="257" y="287"/><use href="#lvl" x="257" y="333"/><use href="#lvl" x="257" y="383"/><use href="#lvl" x="371" y="383"/>
    <g class="note">
      <text x="335" y="203">LAP. ATAP SPANDEK</text><text x="317" y="207">RENG RANGKA BAJA RINGAN</text><text x="318" y="280">PLAT LANTAI T.12</text>
      <text x="251" y="242">+11.25</text><text x="252" y="286">+7.50</text><text x="252" y="332">+4.00</text><text x="252" y="382">±0.00</text><text x="252" y="392">-0.30</text>
      <text x="360" y="381">MUKA TANAH</text><text x="329" y="382">+0.05</text><text x="326" y="345">+3.785</text>
    </g>
    <g class="note strong">
      <text x="275" y="218">15/15</text><text x="351" y="218">15/15</text><text x="288" y="247">20/30</text><text x="351" y="247">20/30</text><text x="288" y="293">20/40</text><text x="351" y="293">20/40</text><text x="288" y="339">20/40</text><text x="351" y="339">20/40</text><text x="288" y="391">20/40</text><text x="351" y="391">20/40</text>
    </g>
    <g class="measure-note"><text x="314" y="424">400</text><text x="335" y="364">340</text></g>
    <g class="caption"><text x="302" y="440">POTONGAN</text><text x="339" y="440">I-I</text></g>
    <path d="M317 442.500h32" stroke="#d77a32"/><circle cx="349" cy="442" r="3" fill="none" stroke="#543"/><path d="M345 442h8M349 437v10" stroke="#543" stroke-width=".7"/>
    <g class="measure-note thin"><text x="327" y="447">SKALA</text><text x="344" y="447">1:100</text></g>

    <g fill="none" stroke="#777" stroke-width="1">
      <path d="M514.500 236v134M518.500 236v134M571.500 236v134M575.500 236v134"/>
      <path d="M452 233.500h178" stroke="#888"/><path d="M470 235.500h155" stroke="#654" stroke-dasharray="2 1"/>
      <path d="M452 274.500h178M452 281.500h178" stroke="#444"/><path d="M452 275.500h178" stroke="#999"/>
      <path d="M452 319.500h178" stroke="#e33" stroke-width="1.500"/><path d="M452 322h178" stroke="#34e" stroke-width="1.800"/><path d="M465 326.500h165" stroke="#222" stroke-width="1.500"/>
      <path d="M452 370.500h178" stroke="#d33"/><path d="M452 372h178M466 373.500h164" stroke="#444"/>
      <path d="M465 230l80-14 77 14" stroke="#44f" stroke-width="1.300"/><path d="M470 230l75-13 73 13" stroke="#e44" stroke-width="1.200" stroke-dasharray="2 6"/>
      <path d="M444.500 236v-15h13v12M451.500 221v15M445 236v16M447.500 272v50h4M452 233.500h20"/>
      <path d="M439.500 249l-2 20 14-20M437 269l9-17M437 269h15" stroke="#444" stroke-width=".9"/><path d="M438 269l14 3M446 252h6" stroke="#d99650"/>
      <path d="M452.500 228v100" stroke="#21110a" stroke-width="2.500"/><path d="M451.500 230v96" stroke="#a55c2c" stroke-width=".6"/>
      <path d="M628 232h4v140h-4z" fill="#27160d" stroke="none"/><path d="M629 232v140" stroke="#ee9d4b" stroke-width="1.500"/>
      <path d="M451.500 328v43M455 338h10"/><path d="M465.500 325v47" stroke="#e8a249" stroke-width="2"/><path d="M464 325v47" stroke="#555" stroke-width=".6"/>
      <path d="M452 234h18M618 234h12" stroke="#25150d" stroke-width="2"/><path d="M470.500 230v5M618.500 229v5" stroke="#d84a2c" stroke-width="2"/>
      <path d="M541.500 236v39M541.500 282v38M538.500 328v42"/>
      <path d="M602.500 300v12"/>
      <path d="M408 374.500h26M631 373.500h17" stroke="#f4f"/><path d="M433 375l18-3h14M434 373v4" stroke="#9e3028"/>
      <path d="M453.500 398v16M516.500 398v16M573.500 398v16M630.500 398v16" stroke-dasharray="2 1"/><path d="M453 412.500h177"/>
      <path d="M453 209h10v21M488 217h9v8M550 205v16M564 211v9M550 205h8M564 211h8M470 267h29l5 7M420 328.500h25" stroke="#333" stroke-width=".8"/>
    </g>
    <circle cx="549.500" cy="223" r="2.500" fill="#444"/>
    <use href="#flight" x="576" y="282"/><use href="#flight" x="576" y="327"/>
    <use href="#landing" x="613" y="306"/><use href="#landing" x="613" y="354"/>
    <use href="#beam" x="452" y="277"/><use href="#beam" x="516" y="277"/><use href="#beam" x="573" y="277"/><use href="#beam" x="630" y="277"/>
    <use href="#beam" x="452" y="322"/><use href="#beam" x="516" y="322"/><use href="#beam" x="573" y="322"/><use href="#beam" x="630" y="322"/>
    <use href="#beam" x="453" y="374"/><use href="#beam" x="466" y="374"/><use href="#beam" x="516" y="374"/><use href="#beam" x="573" y="374"/><use href="#beam" x="630" y="374"/>
    <use href="#man" x="462" y="253"/><use href="#man" x="495" y="298"/><use href="#man" x="486" y="349"/>
    <use href="#foot" x="453" y="374"/><use href="#foot" x="516" y="374"/><use href="#foot" x="573" y="374"/><use href="#foot" x="630" y="374"/>
    <use href="#mark" x="400" y="231"/><use href="#mark" x="400" y="273"/><use href="#mark" x="400" y="318"/><use href="#mark" x="400" y="370"/><use href="#mark" x="649" y="372"/>
    <path d="M483 276h3v3h-3zM543 276h3v3h-3zM600 276h3v3h-3zM483 321h3v3h-3zM543 321h3v3h-3zM600 321h3v3h-3z" fill="#432"/>
    <g class="note">
      <text x="395" y="230">+11.25</text><text x="395" y="272">+7.50</text><text x="395" y="317">+4.00</text><text x="395" y="368">±0.00</text><text x="395" y="379">-0.30</text>
      <text x="468" y="266">PLAT LANTAI T.12 Cm</text><text x="419" y="327">CANOPY T.10 Cm</text><text x="639" y="367">MUKA TANAH</text><text x="644" y="371">-0.30</text>
      <text x="529" y="240">+3.785</text><text x="529" y="286">+3.785</text><text x="526" y="331">+3.785</text><text x="532" y="273">+8.00</text><text x="532" y="318">+4.00</text><text x="528" y="369">+0.05</text><text x="617" y="305">+2.00</text><text x="617" y="352">+2.00</text>
    </g>
    <g class="note strong">
      <text x="441" y="210">LISTPLANK</text><text x="448" y="214">15/20</text><text x="482" y="218">RABUNG</text><text x="551" y="207">KUDA-KUDA</text><text x="565" y="211">ATAP SPANDEK</text>
      <text x="455" y="280">20/40</text><text x="487" y="280">20/30</text><text x="519" y="280">20/40</text><text x="547" y="280">20/30</text><text x="576" y="280">20/40</text><text x="603" y="280">20/30</text><text x="632" y="279">20/40</text>
      <text x="455" y="325">20/30</text><text x="487" y="325">20/30</text><text x="519" y="325">20/40</text><text x="547" y="325">20/30</text><text x="576" y="325">20/40</text><text x="603" y="325">20/30</text><text x="632" y="325">20/40</text>
      <text x="455" y="377">20/40</text><text x="468" y="377">20/40</text><text x="519" y="377">20/40</text><text x="576" y="377">20/40</text>
    </g>
    <g class="measure-note"><text x="481" y="414">500</text><text x="541" y="414">450</text><text x="598" y="414">450</text><text x="538" y="256">400</text><text x="538" y="302">400</text><text x="535" y="350">370</text></g>
    <g class="caption"><text x="580" y="427">POTONGAN</text><text x="617" y="427">II-II</text></g>
    <path d="M590 428.500h42" stroke="#d77a32"/><circle cx="629" cy="428" r="3" fill="none" stroke="#543"/><path d="M625 428h8M629 423v10" stroke="#543" stroke-width=".7"/>
    <g class="measure-note thin"><text x="607" y="433">SKALA</text><text x="624" y="433">1:100</text></g>
  </svg>
  <svg class="ucs" viewBox="0 0 30 50" aria-hidden="true"><path d="M1.500 1.500v46h26zM1.500 43.500h4v4M2 15l4 2 3-4M5.500 17v4M16 40l7 7M23 40l-7 7" fill="none" stroke="#4567c4" stroke-width="1.300"/></svg>
  <aside class="navbar">
    <i class="bar"></i>
    <button aria-label="Steering wheel"><svg viewBox="0 0 10 10"><circle cx="5" cy="5" r="4" fill="none" stroke="#c6c6c6"/><circle cx="5" cy="5" r="1.500" fill="#c6c6c6"/></svg></button>
    <button aria-label="Pan"><svg viewBox="0 0 10 10"><path d="M3 9L1 5l2 1V2l2 3V1l2 4 1-3v5L7 9z" fill="#aaa" stroke="#c6c6c6" stroke-width=".6"/></svg></button>
    <button aria-label="Zoom"><svg viewBox="0 0 10 10"><path d="M1 1l8 8M9 1L1 9" stroke="#c6c6c6"/><circle cx="5" cy="5" r="2" fill="#999" stroke="#c6c6c6"/></svg></button>
    <button aria-label="Orbit"><svg viewBox="0 0 10 10"><path d="M2 1v5a3 3 0 0 0 6 0V5" fill="none" stroke="#c6c6c6"/><circle cx="6" cy="4" r="2" fill="#aaa"/></svg></button>
    <i class="bar"></i>
  </aside>
  <div class="command">
    <ol class="history"><li>Command:   &lt;Switching to: POTONGAN&gt;</li><li>Restoring cached viewports - Regenerating layout.</li><li>Regenerating 2 modified entities.</li></ol>
    <div class="prompt">
      <button aria-label="Close command line"><svg><use href="#x"/></svg></button>
      <button aria-label="Customize"><svg><use href="#wrench"/></svg></button>
      <div class="entry"><svg><use href="#prompt"/></svg><i class="down"></i><input type="text" aria-label="Command" placeholder="Type a command"><i class="up"></i></div>
    </div>
  </div>
</main>

<footer class="bottom">
  <nav class="layouts">
    <button>Model</button><button>DENAH</button><button>TAMPAK</button><button class="active">POTONGAN</button><button>PONDASI</button><button>DETAIL PONDASI 1</button><button>DETAIL PONDASI 2</button><button>PEMBESIAN</button><button>PEMBESIAN (2)</button><button>KOLOM</button><button>BALOK LANTAI</button><button>RINGBALOK</button><button>LANTAI</button><button>KUSEN</button><button>DETAIL KUSEN</button><button class="plus" aria-label="New layout"><svg><use href="#plus"/></svg></button>
  </nav>
  <button class="more" aria-label="More layouts"><i class="down big"></i><i class="down big"></i></button>
  <div class="status">
    <button class="paper-mode">PAPER</button>
    <button aria-label="Ortho"><svg><use href="#ortho"/></svg></button>
    <button aria-label="Polar"><svg><use href="#polar"/></svg></button><i class="down big"></i>
    <button aria-label="Isodraft"><svg><use href="#iso"/></svg></button><i class="down big"></i>
    <button class="on" aria-label="Snap tracking"><svg><use href="#otrack"/></svg></button>
    <button class="on" aria-label="Object snap"><svg><use href="#osnap"/></svg></button><i class="down big"></i>
    <button aria-label="Annotation visibility"><svg><use href="#annv"/></svg></button>
    <button aria-label="Auto scale"><svg><use href="#anns"/></svg></button>
    <button aria-label="Annotation scale"><svg><use href="#anns"/></svg></button>
    <button aria-label="Workspace"><svg><use href="#gear"/></svg></button><i class="down big"></i>
    <button aria-label="Annotation monitor"><svg><use href="#plus"/></svg></button>
    <button class="wide" aria-label="Quick properties"><svg><use href="#shapes"/></svg></button>
    <button aria-label="Sheet"><svg><use href="#page"/></svg></button>
    <button aria-label="Lock UI"><svg><use href="#lockui"/></svg></button>
    <button class="wide" aria-label="Isolate objects"><svg><use href="#iso2"/></svg></button>
    <button class="wide" aria-label="Clean screen"><svg><use href="#full"/></svg></button>
    <button aria-label="Customization"><svg><use href="#menu"/></svg></button>
  </div>
</footer>
</body>
</html>
```
FILE: styles.css
```css
* { box-sizing: border-box; }
body {
  margin: 0;
  height: 100vh;
  display: flex;
  flex-direction: column;
  overflow: hidden;
  background: #393939;
  color: #eee;
  font: 6px/8px "Open Sans", "Noto Sans", sans-serif;
}
button, input, select {
  font: inherit;
  color: inherit;
  background: none;
  border: 0;
  padding: 0;
  margin: 0;
}
button {
  display: flex;
  align-items: center;
  white-space: nowrap;
}
svg { flex: none; width: 10px; height: 10px; }
.defs { position: absolute; width: 0; height: 0; }
h1, h2 { margin: 0; font: inherit; }

.down, .up, .right {
  flex: none;
  width: 0;
  height: 0;
  border: 1px solid transparent;
  border-top: 2px solid currentColor;
  border-bottom: 0;
}
.down.big { border-width: 2px 2px 0; }
.up { border: 2px solid transparent; border-bottom-color: #222; border-top: 0; }
.right { border: 2px solid transparent; border-left-color: #fff; border-right: 0; }

/* Title bar and ribbon tabs */
.top { display: flex; height: 24px; flex: none; background: #4f4f4f; }
.app-menu {
  width: 22px;
  height: 22px;
  background: linear-gradient(#b5b5b5, #777);
  border: 1px solid #333;
  gap: 1px;
}
.app-menu svg { width: 16px; height: 18px; }
.app-menu .down { color: #222; }
.top-rows { flex: 1; min-width: 0; }
.titlebar { display: flex; height: 13px; background: #632317; }
.quick {
  display: flex;
  align-items: center;
  gap: 3px;
  width: 140px;
  padding-left: 4px;
  background: #999;
}
.quick > .down { margin-left: -1px; }
.quick > .down.big { margin-left: 2px; }
.app-title {
  flex: 1;
  display: flex;
  justify-content: center;
  gap: 7px;
  padding: 0 30px 0 28px;
  line-height: 13px;
  color: #170906;
}
.info { display: flex; width: 238px; background: #999; color: #eee; align-items: stretch; }
.info button { gap: 2px; margin-left: 3px; }
.info .expand { width: 7px; margin: 0; justify-content: center; }
.search { width: 96px; background: #757575; border: 1px solid #666; padding-left: 2px; font-style: italic; color: #ddd; }
.search::placeholder, .entry input::placeholder { color: inherit; opacity: 1; }
.info .sign { width: 60px; }
.sign .down { margin-left: auto; }
.info .help { margin-left: 10px; }
.window-buttons {
  display: flex;
  width: 87px;
  padding: 0 6px 0 20px;
  justify-content: space-between;
  color: #d8c8a8;
}
.ribbon-tabs { display: flex; gap: 1px; height: 11px; padding-left: 2px; align-items: stretch; }
.ribbon-tabs button { padding: 0 5px; }
.ribbon-tabs .current { background: #646464; color: #fff; }
.ribbon-tabs .context { background: #65676f; border: 1px solid #5a62a0; border-bottom: 0; padding: 0 4px; color: #fff; }
.ribbon-tabs .toggle { gap: 3px; margin-left: 6px; }
.pill { width: 7px; height: 4px; background: #eee; border-radius: 1px; }

/* Ribbon */
.ribbon {
  display: flex;
  flex: none;
  height: 53px;
  background: linear-gradient(#4a4a4a 12px, #504742 12px, #504742 17px, #444 17px, #444 33px, #383838 33px);
  border-bottom: 1px solid #666;
}
.panel {
  display: flex;
  flex-direction: column;
  flex: none;
  background: #5a5a5a;
  border-right: 1px solid #484848;
  border-top: 1px solid #484848;
}
.panel h2 {
  display: flex;
  align-items: center;
  justify-content: center;
  gap: 3px;
  height: 10px;
  padding-bottom: 1px;
  background: #4b4b4b;
}
.tools { flex: 1; display: flex; padding: 1px 1px 0; }
.large {
  flex-direction: column;
  justify-content: flex-start;
  text-align: center;
  height: 39px;
  min-width: 23px;
  padding-top: 1px;
}
.large svg { width: 18px; height: 18px; margin-bottom: 1px; }
.large .down { margin-top: 3px; }
.letter { height: 19px; font: 22px/19px "Liberation Sans", sans-serif; }
.hot { min-width: 27px; background: linear-gradient(#6c6c6c 50%, #858585 50%); box-shadow: inset 0 0 0 1px #454545; }
.stack { display: grid; grid-template-rows: repeat(3, 13px); align-content: start; }
.stack.fill { flex: 1; min-width: 0; }
.stack button, .grid button { gap: 2px; }
.split .down { margin-left: auto; }

.draw { width: 121px; }
.draw .stack { padding-left: 2px; }
.draw .stack button { gap: 4px; }
.modify { width: 133px; }
.grid {
  display: grid;
  grid-template-columns: 38px 37px 33px 10px;
  grid-template-rows: repeat(3, 13px);
  padding-left: 3px;
}
.grid .split { margin-right: 1px; }
.grid button:nth-child(4n) { margin-left: 7px; }
.annotation { width: 101px; }
.annotation .stack { width: 38px; margin-left: 3px; }
.layer { width: 145px; }
.layer .large { margin: 0 1px 0 2px; }
.combo {
  display: flex;
  align-items: center;
  gap: 4px;
  height: 12px;
  padding: 0 3px 0 2px;
  background: linear-gradient(#484848, #5e5e5e);
  border: 1px solid #414141;
}
.combo select { flex: 1; min-width: 0; appearance: none; line-height: 8px; }
.combo .down { pointer-events: none; }
.layer .combo { gap: 2px; }
.layer .combo svg { margin-right: -1px; }
.swatch { width: 8px; height: 8px; background: #2c1509; flex: none; }
.icon-row { display: flex; gap: 3px; padding-left: 2px; }
.block { width: 87px; }
.block .stack { padding-left: 2px; padding-right: 3px; }
.props { width: 141px; }
.props .stack { padding-left: 2px; }
.prop { display: flex; align-items: center; gap: 1px; }
.prop .combo { flex: 1; }
.prop .swatch { margin-left: 5px; }
.rule { width: 34px; height: 1px; background: #bbb; }
.prop .rule + select { margin-left: -3px; }
.launch { margin: 0 0 0 auto; }
.props h2 { padding-left: 50px; }
.groups { width: 37px; }
.groups .on { background: #4b6fc0; outline: 1px solid #7694d8; margin: 1px 0; }
.utils { width: 52px; }
.utils .large { width: 37px; }
.clip { width: 42px; }
.clip .large { width: 28px; }
.view { width: 33px; }
.view .large { width: 32px; }

/* Drawing tabs */
.doc-tabs { display: flex; flex: none; height: 14px; padding: 1px 0 0 11px; background: #393939; color: #c4c4c4; }
.doc {
  display: flex;
  align-items: center;
  justify-content: space-between;
  padding: 0 7px 0 6px;
  background: linear-gradient(#575757, #484848);
  clip-path: polygon(0 100%, 3px 0, calc(100% - 4px) 0, 100% 100%);
}
.doc .close { color: #303030; }
.doc svg { width: 6px; height: 6px; }
.start { width: 66px; }
.cafe { width: 66px; }
.stadium { width: 79px; }
.pasar1 { width: 112px; }
.pasar { width: 104px; }
.doc.active { width: 67px; background: linear-gradient(#8c8c8c, #777); color: #fff; }
.add { margin: 2px 0 2px 4px; padding: 0 3px; background: #555; border-radius: 4px; }
.add svg { width: 6px; height: 6px; }

/* Drawing area */
.canvas {
  position: relative;
  flex: 1;
  min-height: 0;
  background: #8a8a8a;
  border-top: 1px solid #a0a0a0;
  border-right: 4px solid #dce6f0;
}
.mdi { position: absolute; right: 3px; top: 3px; display: flex; gap: 1px; color: #eee; }
.paper { position: absolute; left: 223px; top: 45px; width: 530px; height: 374px; box-shadow: 3px 3px 0 #7d7d7d; }
.note { font: 4px "Open Sans", sans-serif; fill: #2c1a0e; }
.strong { font-weight: bold; fill: #402008; }
.measure-note { font: bold 4px "Open Sans", sans-serif; fill: #f01818; }
.thin { font-weight: normal; }
.caption { font: 6px "Liberation Sans", sans-serif; fill: #f01818; }
.ucs { position: absolute; left: 7px; bottom: 6px; width: 30px; height: 50px; }
.navbar {
  position: absolute;
  right: 1px;
  top: 140px;
  width: 18px;
  height: 71px;
  display: flex;
  flex-direction: column;
  align-items: center;
  justify-content: space-between;
  background: #999;
  border: 1px solid #b0b0b0;
  border-radius: 2px;
}
.bar { align-self: stretch; height: 4px; background: #adadad; }
.command { position: absolute; left: 382px; bottom: 1px; width: 262px; font-family: "DejaVu Sans Mono", monospace; }
.history { list-style: none; margin: 0 0 1px 31px; padding: 0; display: grid; gap: 3px; justify-items: start; color: #fff; }
.history li { background: #b4b4b4d0; padding: 0 1px; white-space: pre; }
.history li:last-child { background: #777; color: #ccc; }
.prompt { display: flex; height: 13px; background: #666; padding-left: 3px; gap: 3px; border-left: 2px solid #777; }
.entry { flex: 1; display: flex; align-items: center; gap: 2px; padding: 0 2px; background: #dcdcdc; color: #777; }
.entry input { flex: 1; min-width: 0; font-style: italic; }

/* Layout tabs and status bar */
.bottom { display: flex; flex: none; height: 14px; background: #393939; color: #c4c4c4; }
.layouts { display: flex; flex: 1; gap: 1px; min-width: 0; height: 10px; padding-left: 6px; }
.layouts button { padding: 0 6px; background: #565656; clip-path: polygon(0 0, 100% 0, calc(100% - 4px) 100%, 4px 100%); }
.layouts .active { background: #858585; color: #fff; font-weight: bold; }
.layouts .plus svg { width: 7px; height: 7px; }
.more { flex-direction: column; justify-content: center; gap: 2px; width: 15px; }
.status { display: flex; align-items: stretch; background: #4d4d4d; border-top: 1px solid #5c5c5c; padding-right: 1px; }
.status button { width: 13px; justify-content: center; }
.status .paper-mode { width: 23px; color: #eee; border-right: 1px solid #666; }
.status .wide { width: 15px; }
.status .down { align-self: center; margin: 0 2px; }
.status .on { background: #5b86c0; width: 12px; margin-right: 1px; }
```
